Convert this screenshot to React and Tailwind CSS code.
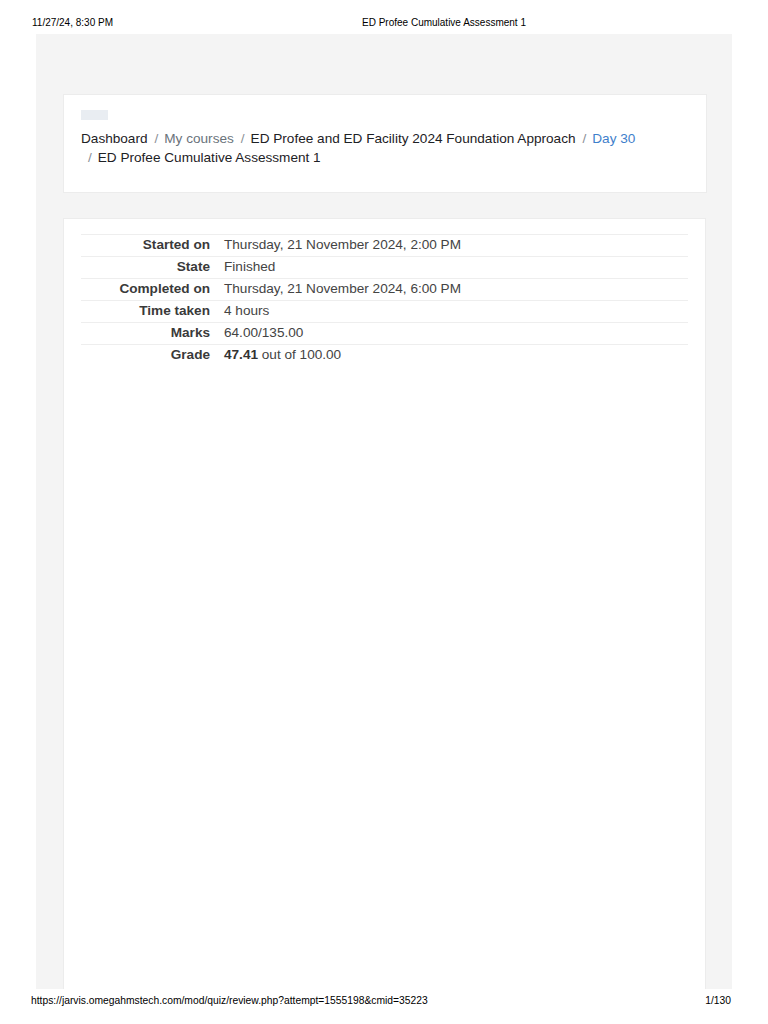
import React from 'react'

const ROWS = [
  { label: 'Started on', value: 'Thursday, 21 November 2024, 2:00 PM' },
  { label: 'State', value: 'Finished' },
  { label: 'Completed on', value: 'Thursday, 21 November 2024, 6:00 PM' },
  { label: 'Time taken', value: '4 hours' },
  { label: 'Marks', value: '64.00/135.00' },
  { label: 'Grade', value: <><strong className="font-bold text-[#333]">47.41</strong> out of 100.00</> },
]

const CRUMBS = [
  { text: 'Dashboard', className: 'text-[#1d2125]' },
  { text: 'My courses', className: 'text-[#6a737b]' },
  { text: 'ED Profee and ED Facility 2024 Foundation Approach', className: 'text-[#1d2125]' },
  { text: 'Day 30', className: 'text-[#3f7fcb]' },
  { text: 'ED Profee Cumulative Assessment 1', className: 'text-[#1d2125]' },
]

const Breadcrumb = () => (
  <nav className="flex flex-wrap text-[13.6px] leading-[19px]">
    {CRUMBS.map((c, i) => (
      <span key={c.text} className={i > 0 ? 'pl-[7px] whitespace-nowrap' : 'whitespace-nowrap'}>
        {i > 0 && <span className="text-[#8a9096] pr-[6px]">/</span>}
        <span className={c.className}>{c.text}</span>
      </span>
    ))}
  </nav>
)

const SummaryTable = () => (
  <div>
    {ROWS.map((r) => (
      <div key={r.label} className="grid grid-cols-[136px_1fr] border-t border-[#eeeeee] h-[22px] items-center text-[13.6px]">
        <div className="text-right pr-[7px] font-bold text-[#3a3a3a]">{r.label}</div>
        <div className="pl-[7px] text-[#444]">{r.value}</div>
      </div>
    ))}
  </div>
)

export default function App() {
  return (
    <div className="bg-white h-[1024px] overflow-hidden flex flex-col" style={{ fontFamily: '"Liberation Sans", Arial, sans-serif' }}>
      <header className="flex h-[34px] items-end pb-[5px] px-[32px] text-[10px] text-black leading-[12px]">
        <span className="w-[330px]">11/27/24, 8:30 PM</span>
        <span>ED Profee Cumulative Assessment 1</span>
      </header>

      <main className="mx-[36px] h-[955px] bg-[#f4f4f4] overflow-hidden pt-[60px] pl-[27px] pr-[25px]">
        <section className="bg-white border border-[#ececec] h-[99px] px-[17px] pt-[15px]">
          <div className="w-[27px] h-[10px] bg-[#e9edf2] mb-[9px]"></div>
          <Breadcrumb />
        </section>

        <section className="mt-[25px] bg-white border border-[#ececec] h-[900px] px-[17px] pt-[15px] mr-[1px]">
          <SummaryTable />
        </section>
      </main>

      <footer className="flex justify-between items-start pl-[31px] pr-[37px] pt-[6px] text-[10.3px] leading-[12px] text-black">
        <span>https://jarvis.omegahmstech.com/mod/quiz/review.php?attempt=1555198&amp;cmid=35223</span>
        <span>1/130</span>
      </footer>
    </div>
  )
}
